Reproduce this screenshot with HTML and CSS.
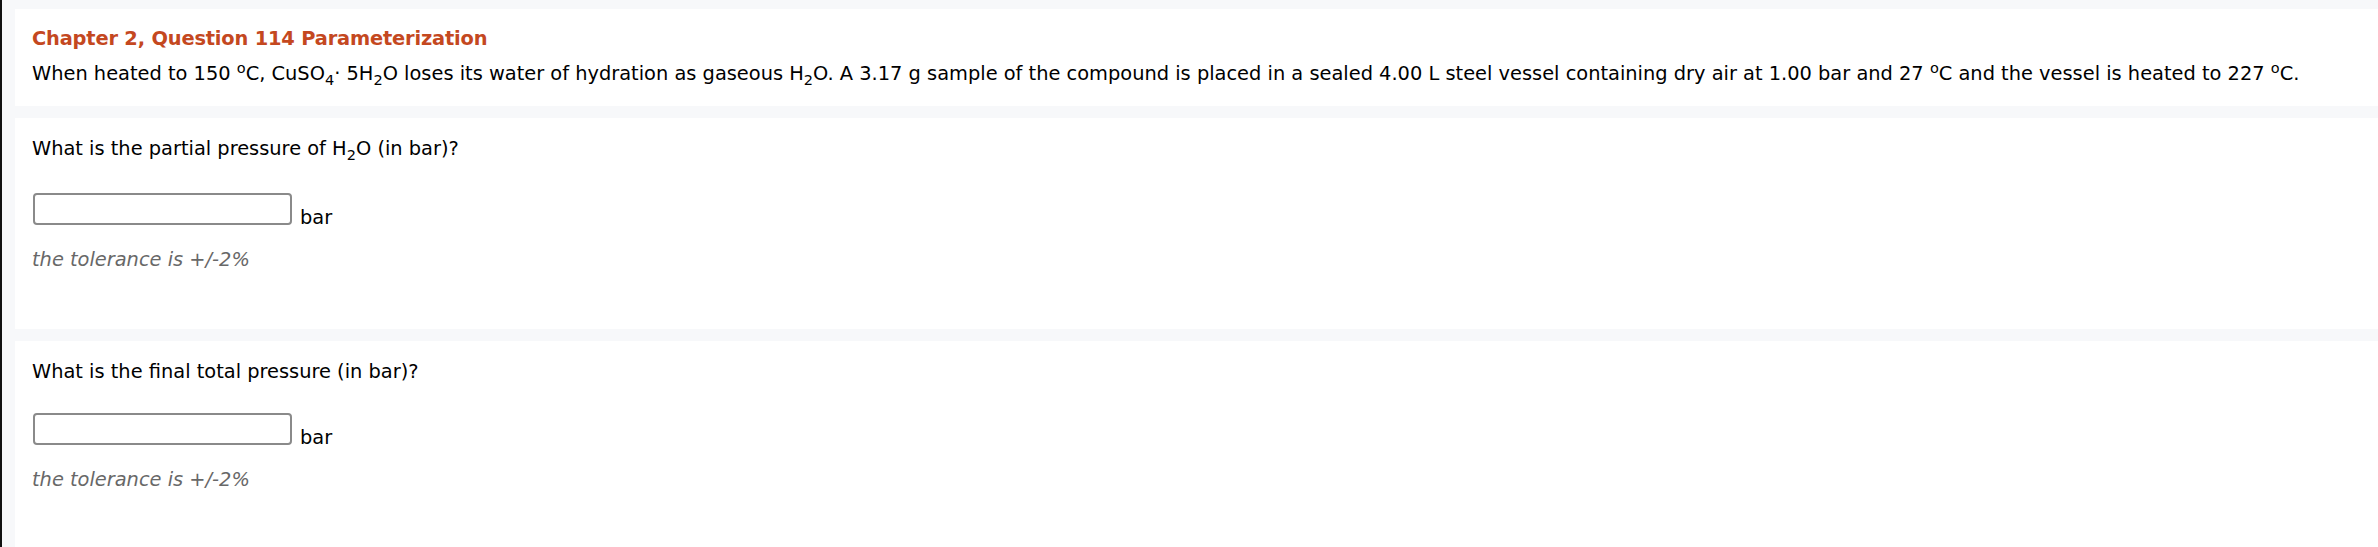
FILE: index.html
```html
<!DOCTYPE html>
<html lang="en">
<head>
<meta charset="utf-8">
<title>Chapter 2, Question 114 Parameterization</title>
<link rel="stylesheet" href="styles.css">
</head>
<body>
<div class="page">
  <section class="panel intro">
    <h1 class="title">Chapter 2, Question 114 Parameterization</h1>
    <p class="stem">When heated to 150 <sup>o</sup>C, CuSO<sub>4</sub>· 5H<sub>2</sub>O loses its water of hydration as gaseous H<sub>2</sub>O. A 3.17 g sample of the compound is placed in a sealed 4.00 L steel vessel containing dry air at 1.00 bar and 27 <sup>o</sup>C and the vessel is heated to 227 <sup>o</sup>C.</p>
  </section>
  <section class="panel question">
    <p class="prompt">What is the partial pressure of H<sub>2</sub>O (in bar)?</p>
    <div class="answer">
      <input class="field" type="text" aria-label="partial pressure of H2O">
      <span class="unit">bar</span>
    </div>
    <p class="tolerance">the tolerance is +/-2%</p>
  </section>
  <section class="panel question last">
    <p class="prompt">What is the final total pressure (in bar)?</p>
    <div class="answer">
      <input class="field" type="text" aria-label="final total pressure">
      <span class="unit">bar</span>
    </div>
    <p class="tolerance">the tolerance is +/-2%</p>
  </section>
</div>
</body>
</html>
```

FILE: styles.css
```css
html, body {
  margin: 0;
  padding: 0;
}

body {
  background: #f7f8fa;
  color: #000;
  font-family: "DejaVu Sans", Verdana, sans-serif;
  font-size: 19.4px;
  line-height: 23px;
}

.page {
  min-height: 100vh;
  box-sizing: border-box;
  border-left: 2px solid #111;
  padding: 9px 0 0 13px;
  display: flex;
  flex-direction: column;
  gap: 12px;
}

.panel {
  background: #fff;
  padding-left: 17px;
  padding-right: 20px;
}

.intro {
  padding-top: 17.75px;
  padding-bottom: 17.65px;
}

.title {
  margin: 0;
  font-size: 19.4px;
  line-height: 23px;
  font-weight: bold;
  letter-spacing: -0.17px;
  color: #c4481f;
}

.stem {
  margin: 10.2px 0 0;
}

sub, sup {
  font-size: 75%;
  line-height: normal;
}

.question {
  padding-top: 18.75px;
  padding-bottom: 58.15px;
}

.question.last {
  flex: 1;
}

.prompt {
  margin: 0;
}

.answer {
  margin-top: 30.5px;
  display: flex;
  align-items: flex-end;
}

.field {
  width: 259px;
  height: 32px;
  box-sizing: border-box;
  margin: 0 0 0 1px;
  padding: 0 6px;
  border: 2px solid #8a8a8a;
  border-radius: 4px;
  background: #fff;
  font: inherit;
}

.unit {
  margin-left: 8px;
  margin-bottom: -3.5px;
}

.tolerance {
  margin: 23px 0 0;
  font-style: italic;
  color: #686868;
}
```
